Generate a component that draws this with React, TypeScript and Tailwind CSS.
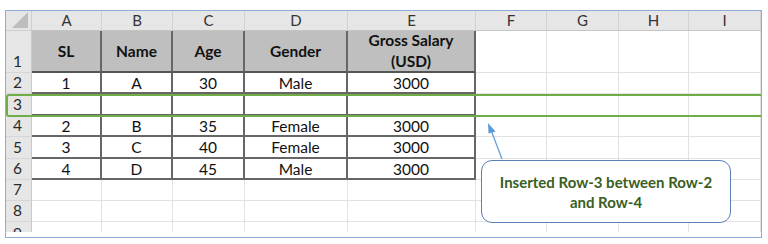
import React from "react";

const COLS = ["A", "B", "C", "D", "E", "F", "G", "H", "I"];

type Row = { n: number; cells: string[]; header?: boolean };

const ROWS: Row[] = [
  { n: 1, cells: ["SL", "Name", "Age", "Gender", "Gross Salary\n(USD)"], header: true },
  { n: 2, cells: ["1", "A", "30", "Male", "3000"] },
  { n: 3, cells: ["", "", "", "", ""] },
  { n: 4, cells: ["2", "B", "35", "Female", "3000"] },
  { n: 5, cells: ["3", "C", "40", "Female", "3000"] },
  { n: 6, cells: ["4", "D", "45", "Male", "3000"] },
  { n: 7, cells: [] },
  { n: 8, cells: [] },
  { n: 9, cells: [] },
];

const font = { fontFamily: "Lato, 'Open Sans', 'Liberation Sans', sans-serif" };

export default function App() {
  return (
    <div className="w-[768px] h-[244px] bg-white overflow-hidden" style={font}>
      <div className="ml-[5px] mt-[10px] w-[757px] h-[228px] border border-[#8eaadb] relative overflow-hidden bg-white">
        <div className="h-[221px] overflow-hidden">
          <div className="grid grid-cols-[26px_70px_71px_72px_103px_128px_71px_72px_70px_72px] grid-rows-[20px_42px_21px_22px_21px_22px_21px_21px_21px_21px] text-[15.5px] text-[#111]">
            {/* corner */}
            <div className="relative bg-[#e6e6e6] border-r border-b border-[#cfcfcf]">
              <svg className="absolute right-[3px] bottom-[2px]" width="16" height="16" viewBox="0 0 16 16">
                <polygon points="16,0 16,16 0,16" fill="#bdbdbd" />
              </svg>
            </div>
            {COLS.map((c) => (
              <div
                key={c}
                className="flex items-center justify-center bg-[#e6e6e6] border-r border-b border-r-[#d2d2d2] border-b-[#c4c4c4] text-[15px] text-[#333] leading-none"
              >
                {c}
              </div>
            ))}
            {ROWS.map((r) => (
              <React.Fragment key={r.n}>
                <div
                  className={`flex pl-[7px] bg-[#e6e6e6] border-r border-b border-r-[#c9c9c9] border-b-[#d6d6d6] text-[15.5px] text-[#2a2a2a] leading-none ${
                    r.header ? "items-end pb-[3px]" : r.n === 9 ? "items-start pt-[4px]" : "items-center"
                  }`}
                >
                  {r.n}
                </div>
                {COLS.map((c, i) => {
                  const inTable = i < 5 && r.n <= 6;
                  if (inTable) {
                    return (
                      <div
                        key={c}
                        className={`flex items-center justify-center text-center whitespace-pre-line border-r-2 border-r-[#666666] border-b-2 leading-[21px] ${
                          r.header
                            ? "bg-[#bfbfbf] font-bold border-b-[#555555]"
                            : "bg-white border-b-[#666666] pt-[1px]"
                        }`}
                      >
                        {r.cells[i]}
                      </div>
                    );
                  }
                  return <div key={c} className="border-r border-b border-[#e2e2e2]" />;
                })}
              </React.Fragment>
            ))}
          </div>
        </div>

        {/* selection of inserted row 3 */}
        <div className="absolute left-[0px] top-[83px] w-[770px] h-[23px] border-2 border-[#70ad47] rounded-[3px]" />

        {/* arrow */}
        <svg className="absolute left-[475px] top-[108px]" width="30" height="44" viewBox="0 0 30 44">
          <line x1="21" y1="40" x2="10" y2="11" stroke="#5b9bd5" strokeWidth="1.2" />
          <polygon points="7,4 14.5,12.5 7.5,14.5" fill="#5b9bd5" />
        </svg>

        {/* callout */}
        <div className="absolute left-[475px] top-[149px] w-[250px] h-[63px] rounded-[11px] border-[1.5px] border-[#5a7fb5] bg-white flex flex-col items-center justify-center text-[15px] font-bold text-[#3a5e22] leading-[20px] text-center">
          <span>Inserted Row-3 between Row-2</span>
          <span>and Row-4</span>
        </div>
      </div>
    </div>
  );
}
